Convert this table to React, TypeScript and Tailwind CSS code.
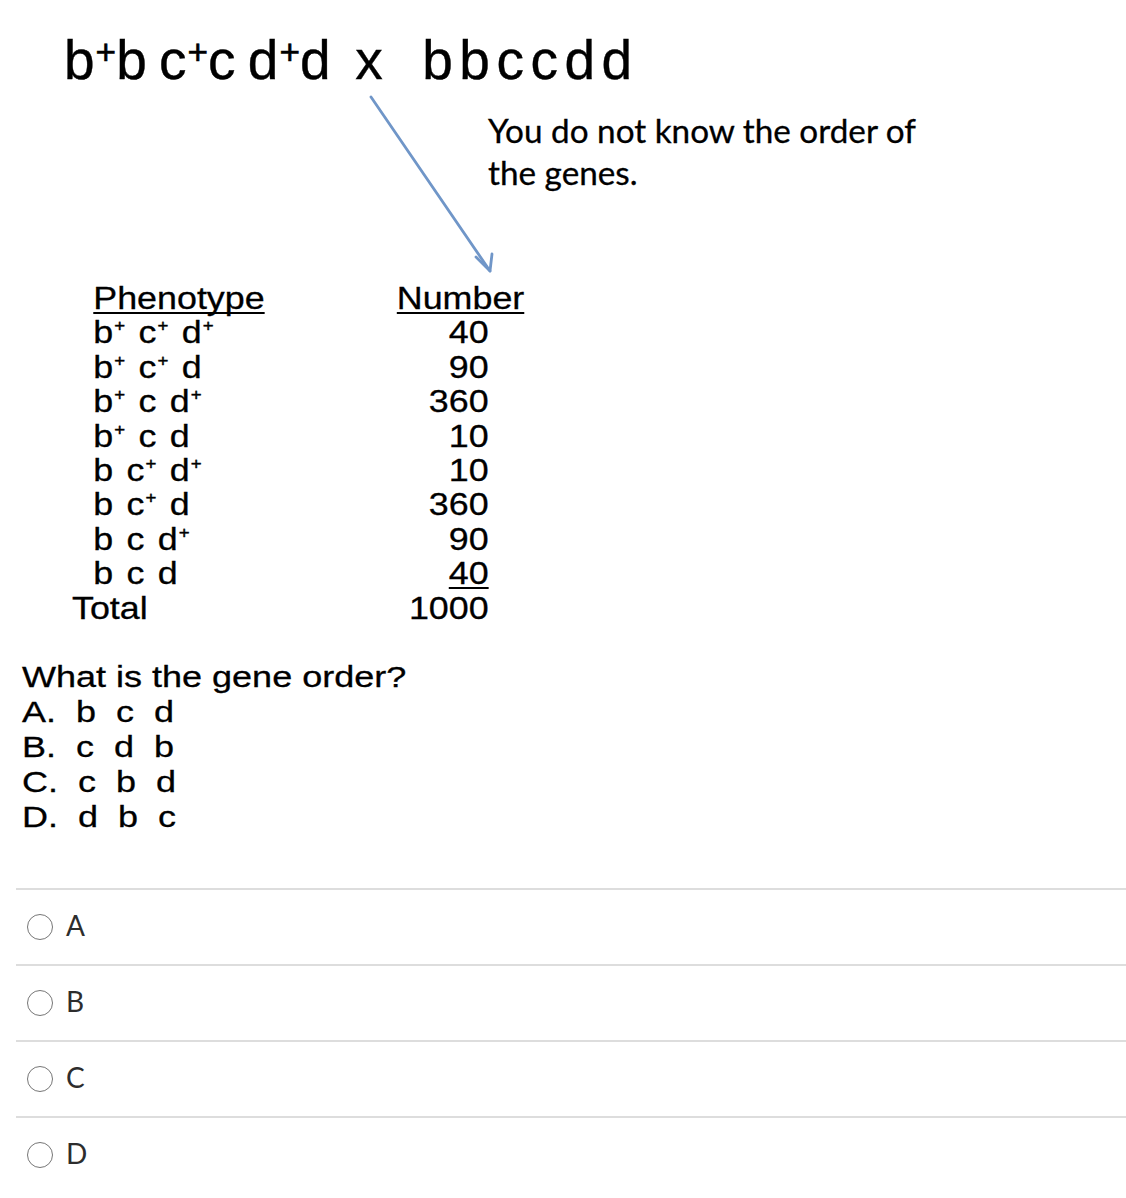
import React from "react";

// superscript "+" on an allele; raise is in the plus's own em
const Plus = ({ big }: { big?: boolean }) =>
  big ? (
    <span className="relative -top-[0.42em] ml-[1px] text-[0.64em] leading-none [-webkit-text-stroke:0.6px]">+</span>
  ) : (
    <span className="relative -top-[0.72em] ml-[1px] text-[0.52em] leading-none [-webkit-text-stroke:0.4px]">+</span>
  );

const rows: { g: [boolean, boolean, boolean]; n: string }[] = [
  { g: [true, true, true], n: "40" },
  { g: [true, true, false], n: "90" },
  { g: [true, false, true], n: "360" },
  { g: [true, false, false], n: "10" },
  { g: [false, true, true], n: "10" },
  { g: [false, true, false], n: "360" },
  { g: [false, false, true], n: "90" },
  { g: [false, false, false], n: "40" },
];

const answers = ["A.  b  c  d", "B.  c  d  b", "C.  c  b  d", "D.  d  b  c"];

const ul =
  "underline decoration-2 underline-offset-[3px] [text-decoration-skip-ink:none]";

const Arrow = () => (
  <svg
    className="pointer-events-none absolute left-0 top-0"
    width="600"
    height="300"
    viewBox="0 0 600 300">
    <g stroke="#7096c8" strokeWidth="2.8" fill="none" strokeLinecap="round" strokeLinejoin="round">
      <line x1="371" y1="97" x2="490" y2="271" />
      <polyline points="476,257 490,271 492,254" />
    </g>
  </svg>
);

export default function App() {
  return (
    <div className="min-h-[1198px] w-[1126px] overflow-hidden bg-white font-['Liberation_Sans',Arial,sans-serif] text-black">
      <div className="relative">
        <Arrow />

        {/* cross */}
        <div className="whitespace-pre pl-[64px] pt-[28px] text-[55px] leading-[64px] [-webkit-text-stroke:0.4px] [word-spacing:-3px]">
          b<Plus big />b c<Plus big />c d<Plus big />d{"  x  "}
          <span className="ml-[15px] tracking-[6.5px]">bbccdd</span>
        </div>

        {/* note */}
        <div className="ml-[488px] mt-[18px] font-['Lato','Open_Sans',sans-serif] text-[32px] leading-[42px] [-webkit-text-stroke:0.3px]">
          <p className="w-fit origin-left scale-x-[1.04] whitespace-nowrap">You do not know the order of</p>
          <p className="w-fit origin-left scale-x-[1.04]">the genes.</p>
        </div>

        {/* data table */}
        <div className="ml-[72px] mt-[87px]">
          <div className="w-fit origin-left scale-x-[1.12] text-[32px] leading-[34.4px] [-webkit-text-stroke:0.3px]">
            <div className="flex">
              <div className="w-[290px] pl-[19px]">
                <span className={ul}>Phenotype</span>
              </div>
              <div className="whitespace-nowrap">
                <span className={ul}>Number</span>
              </div>
            </div>
            {rows.map((r, i) => (
              <div key={i} className="flex">
                <div className="w-[290px] whitespace-pre pl-[19px] [word-spacing:3px]">
                  b{r.g[0] ? <Plus /> : null} c{r.g[1] ? <Plus /> : null} d
                  {r.g[2] ? <Plus /> : null}
                </div>
                <div className="w-[82px] text-right">
                  <span className={i === rows.length - 1 ? ul : ""}>{r.n}</span>
                </div>
              </div>
            ))}
            <div className="flex">
              <div className="w-[290px]">Total</div>
              <div className="w-[82px] text-right">1000</div>
            </div>
          </div>
        </div>

        {/* question */}
        <div className="ml-[22px] mt-[34px]">
          <div className="w-fit origin-left scale-x-[1.2] text-[30px] leading-[35px] [-webkit-text-stroke:0.3px]">
            <p>What is the gene order?</p>
            {answers.map((a) => (
              <p key={a} className="whitespace-pre">
                {a}
              </p>
            ))}
          </div>
        </div>
      </div>

      {/* answer choices */}
      <div className="ml-[16px] mt-[54px] font-['Lato','Open_Sans',sans-serif] text-[28px] text-[#2d2d2d]">
        {["A", "B", "C", "D"].map((c) => (
          <label
            key={c}
            className="flex h-[76px] cursor-pointer items-center gap-[13px] border-t-2 border-[#dddddd] pl-[11px]">
            <span className="h-[26px] w-[26px] shrink-0 rounded-full border-[1.5px] border-[#767676]" />
            <span className="-mt-[5px]">{c}</span>
          </label>
        ))}
      </div>
    </div>
  );
}
